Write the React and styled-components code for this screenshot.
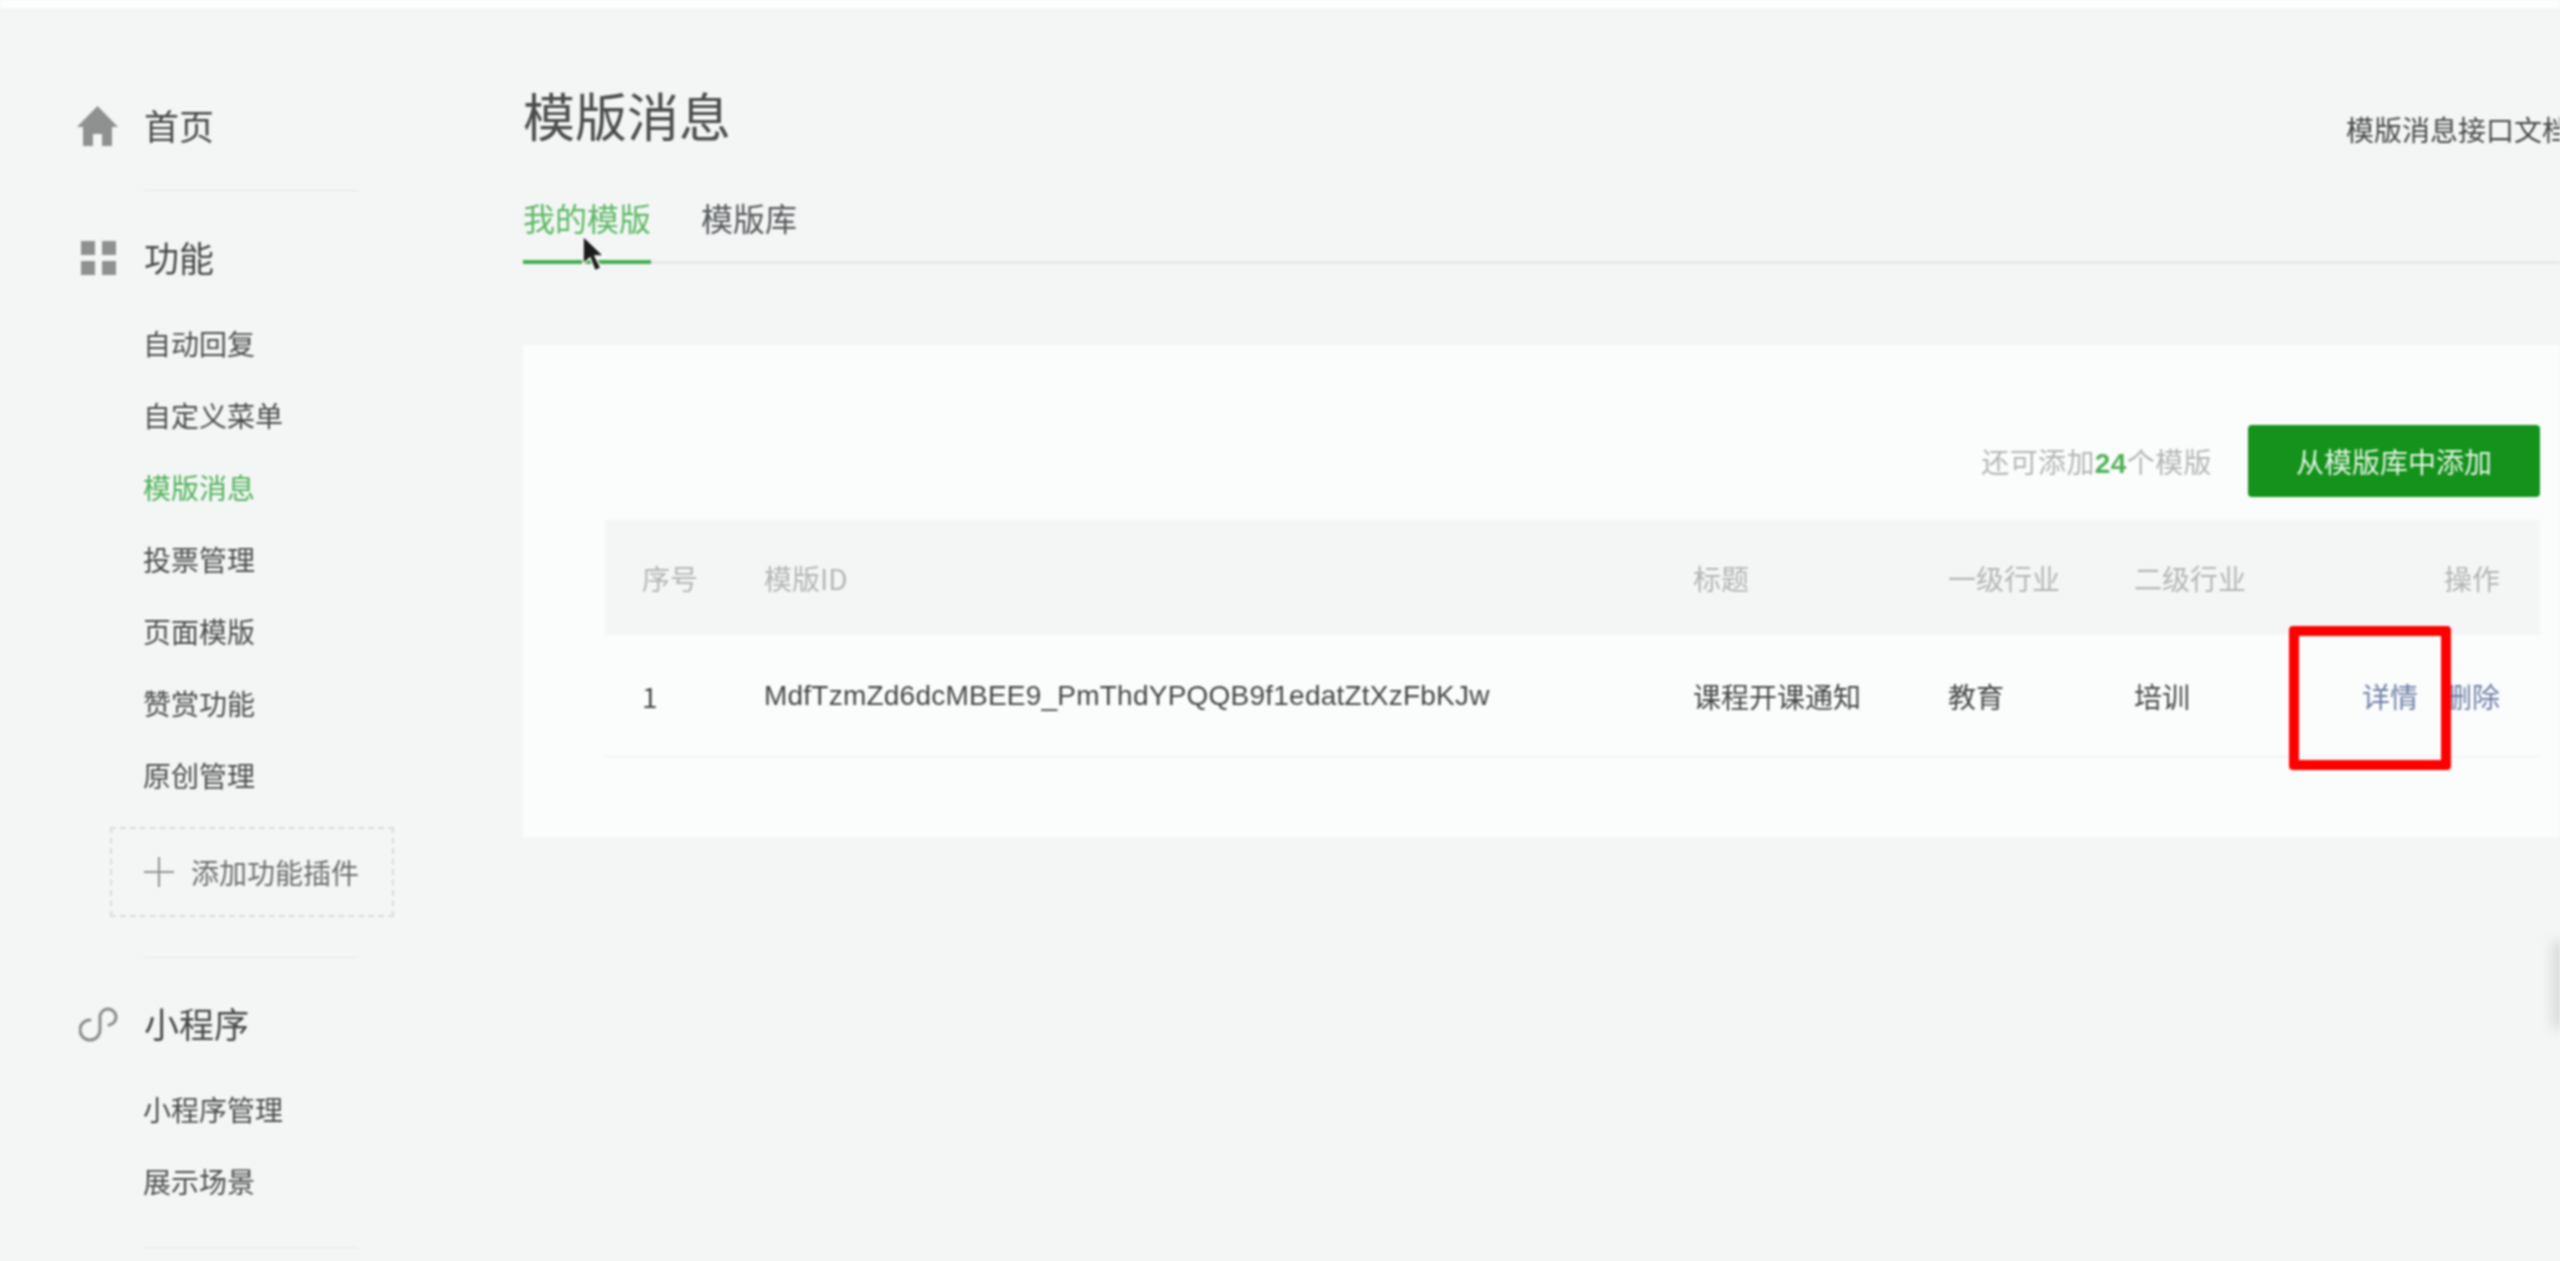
import React from "react";
import styled, { createGlobalStyle } from "styled-components";

const GlobalStyle = createGlobalStyle`
  html, body {
    margin: 0;
    height: 100%;
    overflow: hidden;
    background: #f4f6f6;
  }
  * { box-sizing: border-box; }
`;

const Page = styled.div`
  position: relative;
  display: flex;
  width: 2560px;
  height: 1261px;
  overflow: hidden;
  border-top: 8px solid #fdfefe;
  background: #f4f6f6;
  color: #404242;
  font-family: "Noto Sans CJK SC", "Liberation Sans", sans-serif;
  filter: blur(0.9px);
`;

const Sidebar = styled.aside`
  flex: none;
  width: 523px;
  padding: 84px 0 0 77px;
`;

const NavHead = styled.div`
  display: flex;
  align-items: center;
  height: 68px;
  padding-bottom: 3px;
  font-size: 35px;
  color: #454747;

  svg { flex: none; }
`;

const IconSlot = styled.span`
  display: flex;
  align-items: center;
  flex: none;
  width: 67px;
  margin-top: 3px;
`;

const Divider = styled.div`
  width: 215px;
  height: 1px;
  margin: ${(p) => p.$top || 0}px 0 ${(p) => p.$bottom || 0}px 66px;
  background: #e6e8e8;
`;

const SubList = styled.ul`
  list-style: none;
  margin: 16px 0 0;
  padding: 0 0 0 66px;
`;

const SubItem = styled.li`
  height: 72px;
  line-height: 70px;
  font-size: 28px;
  color: ${(p) => (p.$active ? "#4fb158" : "#4a4c4c")};
`;

const AddPlugin = styled.div`
  display: flex;
  align-items: center;
  gap: 17px;
  width: 284px;
  height: 90px;
  margin: 15px 0 0 33px;
  padding-left: 32px;
  border: 2px dashed #d9dbdb;
  font-size: 28px;
  color: #6b6d6d;
`;

const Main = styled.main`
  flex: none;
  width: 2060px;
`;

const TitleRow = styled.div`
  display: flex;
  align-items: center;
  justify-content: space-between;
  height: 60px;
  margin-top: 77px;
  padding-right: 13px;
`;

const Title = styled.h1`
  margin: 0;
  font-size: 52px;
  font-weight: 400;
  line-height: 60px;
  color: #4a4c4c;
`;

const DocLink = styled.a`
  margin-top: 28px;
  font-size: 28px;
  color: #444646;
`;

const Tabs = styled.nav`
  display: flex;
  gap: 50px;
  height: 119px;
  padding-top: 50px;
  border-bottom: 3px solid #e7e9e9;
`;

const Tab = styled.a`
  position: relative;
  height: 69px;
  margin-bottom: -3px;
  font-size: 32px;
  line-height: 44px;
  color: ${(p) => (p.$active ? "#5cb864" : "#55585a")};
  border-bottom: 4px solid ${(p) => (p.$active ? "#45ad4e" : "transparent")};
`;

const Cursor = styled.svg`
  position: absolute;
  left: 59px;
  top: 40px;
`;

const Card = styled.section`
  margin-top: 81px;
  padding: 80px 43px 80px 82px;
  background: #fbfcfc;
`;

const Toolbar = styled.div`
  display: flex;
  align-items: center;
  justify-content: flex-end;
  gap: 36px;
  height: 72px;
  margin-bottom: 23px;
`;

const Note = styled.span`
  font-size: 28px;
  letter-spacing: 0.4px;
  color: #b3b5b5;

  b {
    color: #4fb158;
    font-family: "Liberation Sans", sans-serif;
    font-weight: 700;
  }
`;

const AddButton = styled.button`
  width: 292px;
  height: 72px;
  border: 0;
  border-radius: 4px;
  background: #14921c;
  color: #e6f4e6;
  font-family: inherit;
  font-size: 28px;
`;

const Row = styled.div`
  position: relative;
  display: grid;
  grid-template-columns: 122px 929px 255px 186px 1fr auto;
  align-items: center;
  height: ${(p) => (p.$head ? 115 : 122)}px;
  padding: 0 40px 0 37px;
  background: ${(p) => (p.$head ? "#f4f6f6" : "transparent")};
  border-bottom: ${(p) => (p.$head ? "0" : "1px solid #eceeee")};
  font-size: 28px;
  color: ${(p) => (p.$head ? "#b3b5b5" : "#454747")};
`;

const TemplateId = styled.span`
  font-family: "Liberation Sans", sans-serif;
  font-size: 28px;
  letter-spacing: 0.23px;
  white-space: nowrap;
`;

const Actions = styled.span`
  display: flex;
  gap: 26px;
  color: #6f80a8;
`;

const Marker = styled.div`
  position: absolute;
  left: 1684px;
  top: -9px;
  width: 162px;
  height: 144px;
  border: 10px solid #ff0000;
  border-radius: 4px;
`;

const EdgeBlob = styled.div`
  position: absolute;
  right: -8px;
  top: 932px;
  width: 16px;
  height: 90px;
  border-radius: 8px;
  background: #d9dbdb;
  filter: blur(6px);
`;

const HomeIcon = () => (
  <svg width="41" height="40" viewBox="0 0 41 40" fill="#8f9090">
    <path d="M20.5 0 L41 21 H35 V40 H25 V28 H16 V40 H6 V21 H0 Z" />
  </svg>
);

const GridIcon = () => (
  <svg width="35" height="34" viewBox="0 0 35 34" fill="#8f9090" style={{ marginLeft: 4 }}>
    <rect x="0" y="0" width="14" height="14" />
    <rect x="21" y="0" width="14" height="14" />
    <rect x="0" y="20" width="14" height="14" />
    <rect x="21" y="20" width="14" height="14" />
  </svg>
);

const MiniIcon = () => (
  <svg width="40" height="35" viewBox="0 0 40 35" fill="none" stroke="#8a8c8c" strokeWidth="3" strokeLinecap="round" style={{ marginLeft: 2 }}>
    <path d="M11 13 A10 10 0 1 0 21 23 V10 A8 8 0 1 1 30 18" />
  </svg>
);

const PlusIcon = () => (
  <svg width="30" height="30" viewBox="0 0 30 30" stroke="#8f9090" strokeWidth="2">
    <path d="M0 15 H30 M15 0 V30" />
  </svg>
);

const Arrow = () => (
  <Cursor width="24" height="38" viewBox="0 0 24 38">
    <path d="M1 1 V29 L8 23 L13 36 L19 33 L13 21 H22 Z" fill="#1c1c1c" stroke="#ffffff" strokeWidth="1.5" />
  </Cursor>
);

const features = ["自动回复", "自定义菜单", "模版消息", "投票管理", "页面模版", "赞赏功能", "原创管理"];
const miniPrograms = ["小程序管理", "展示场景"];

export default function App() {
  return (
    <Page>
      <GlobalStyle />
      <Sidebar>
        <NavHead>
          <IconSlot><HomeIcon /></IconSlot>
          首页
        </NavHead>
        <Divider $top={30} $bottom={33} />
        <NavHead>
          <IconSlot><GridIcon /></IconSlot>
          功能
        </NavHead>
        <SubList>
          {features.map((name) => (
            <SubItem key={name} $active={name === "模版消息"}>{name}</SubItem>
          ))}
        </SubList>
        <AddPlugin>
          <PlusIcon />
          添加功能插件
        </AddPlugin>
        <Divider $top={40} $bottom={32} />
        <NavHead>
          <IconSlot><MiniIcon /></IconSlot>
          小程序
        </NavHead>
        <SubList>
          {miniPrograms.map((name) => (
            <SubItem key={name}>{name}</SubItem>
          ))}
        </SubList>
        <Divider $top={29} />
      </Sidebar>

      <Main>
        <TitleRow>
          <Title>模版消息</Title>
          <DocLink>模版消息接口文档</DocLink>
        </TitleRow>
        <Tabs>
          <Tab $active>
            我的模版
            <Arrow />
          </Tab>
          <Tab>模版库</Tab>
        </Tabs>
        <Card>
          <Toolbar>
            <Note>还可添加<b>24</b>个模版</Note>
            <AddButton>从模版库中添加</AddButton>
          </Toolbar>
          <Row $head>
            <span>序号</span>
            <span>模版ID</span>
            <span>标题</span>
            <span>一级行业</span>
            <span>二级行业</span>
            <span>操作</span>
          </Row>
          <Row>
            <span>1</span>
            <TemplateId>MdfTzmZd6dcMBEE9_PmThdYPQQB9f1edatZtXzFbKJw</TemplateId>
            <span>课程开课通知</span>
            <span>教育</span>
            <span>培训</span>
            <Actions>
              <span>详情</span>
              <span>删除</span>
            </Actions>
            <Marker />
          </Row>
        </Card>
      </Main>
      <EdgeBlob />
    </Page>
  );
}
